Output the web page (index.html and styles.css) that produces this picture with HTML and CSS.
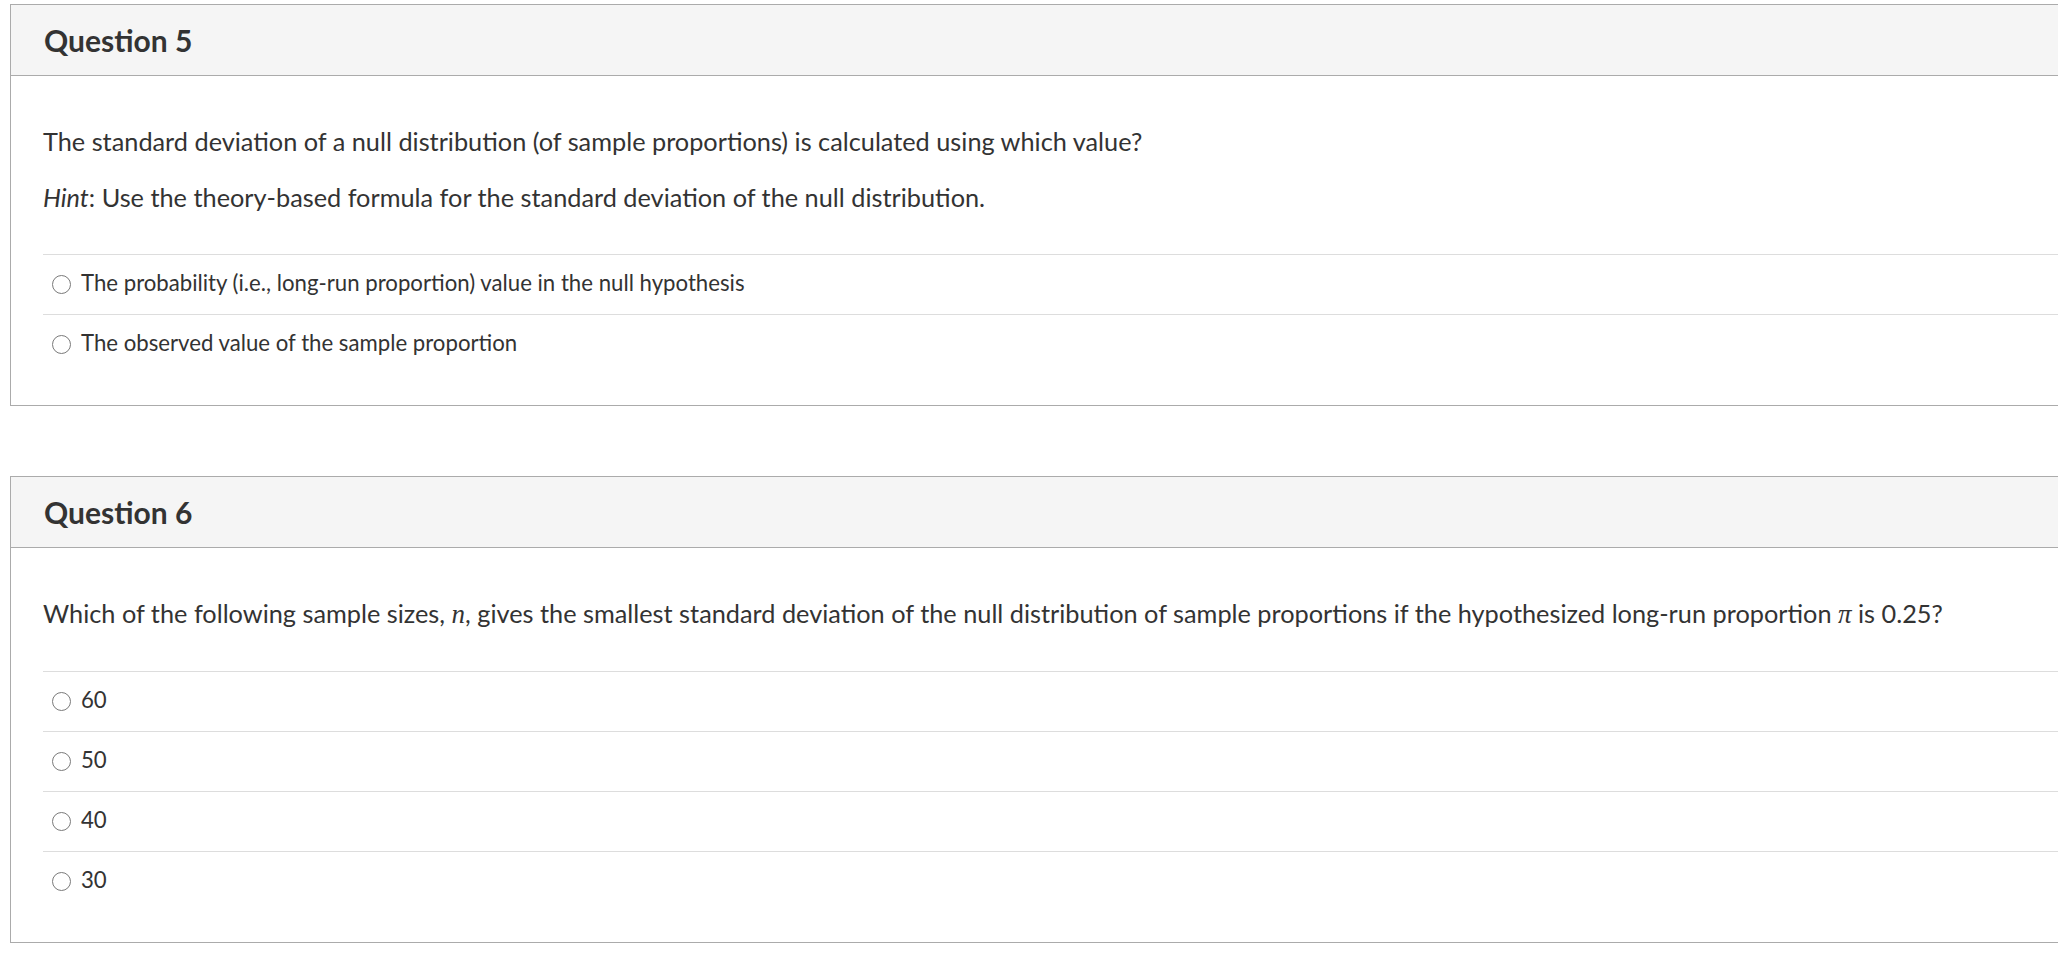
FILE: index.html
```html
<!DOCTYPE html>
<html>
<head>
<meta charset="utf-8">
<link rel="stylesheet" href="styles.css">
</head>
<body>
<div class="page">
  <section class="question">
    <div class="q-header"><h2 class="q-title">Question 5</h2></div>
    <div class="q-body">
      <div class="q-text">
        <p>The standard deviation of a null distribution (of sample proportions) is calculated using which value?</p>
        <p><em>Hint</em>: Use the theory-based formula for the standard deviation of the null distribution.</p>
      </div>
      <div class="answers">
        <label class="answer"><span class="radio"></span><span class="answer-text">The probability (i.e., long-run proportion) value in the null hypothesis</span></label>
        <label class="answer"><span class="radio"></span><span class="answer-text">The observed value of the sample proportion</span></label>
      </div>
    </div>
  </section>

  <section class="question">
    <div class="q-header"><h2 class="q-title">Question 6</h2></div>
    <div class="q-body">
      <div class="q-text">
        <p>Which of the following sample sizes, <span class="math">n</span>, gives the smallest standard deviation of the null distribution of sample proportions if the hypothesized long-run proportion <span class="math">π</span> is 0.25?</p>
      </div>
      <div class="answers">
        <label class="answer"><span class="radio"></span><span class="answer-text">60</span></label>
        <label class="answer"><span class="radio"></span><span class="answer-text">50</span></label>
        <label class="answer"><span class="radio"></span><span class="answer-text">40</span></label>
        <label class="answer"><span class="radio"></span><span class="answer-text">30</span></label>
      </div>
    </div>
  </section>
</div>
</body>
</html>
```

FILE: styles.css
```css
html, body {
  margin: 0;
  padding: 0;
  background: #ffffff;
  overflow: hidden;
}

body {
  font-family: Lato, "Open Sans", "Liberation Sans", sans-serif;
  color: #333333;
}

.page {
  padding: 4px 0 0 10px;
  display: flex;
  flex-direction: column;
  gap: 70px;
}

.question {
  border: 1px solid #ababab;
  border-right: none;
  background: #ffffff;
}

.q-header {
  height: 70px;
  background: #f5f5f5;
  border-bottom: 1px solid #ababab;
  display: flex;
  align-items: center;
  padding-left: 33px;
}

.q-title {
  margin: 0;
  font-size: 30px;
  font-weight: 700;
  color: #333333;
}

.q-body {
  padding: 47px 0 31px 32px;
}

.q-text p {
  margin: 0 0 20px 0;
  font-size: 25.3px;
  line-height: 36px;
}

.q-text p:last-child {
  margin-bottom: 39px;
}

.q-text em {
  font-style: italic;
}

.math {
  font-family: "Liberation Serif", "DejaVu Serif", serif;
  font-style: italic;
  font-size: 27px;
}

.answers {
  display: flex;
  flex-direction: column;
}

.answer {
  height: 59px;
  border-top: 1px solid #dddddd;
  display: flex;
  align-items: center;
  gap: 10px;
  padding-left: 9px;
}

.radio {
  width: 17px;
  height: 17px;
  border: 1.5px solid #7a7a7a;
  border-radius: 50%;
  background: #ffffff;
  flex: none;
}

.answer-text {
  font-size: 22.2px;
  line-height: 24px;
  padding-bottom: 4px;
}
```
